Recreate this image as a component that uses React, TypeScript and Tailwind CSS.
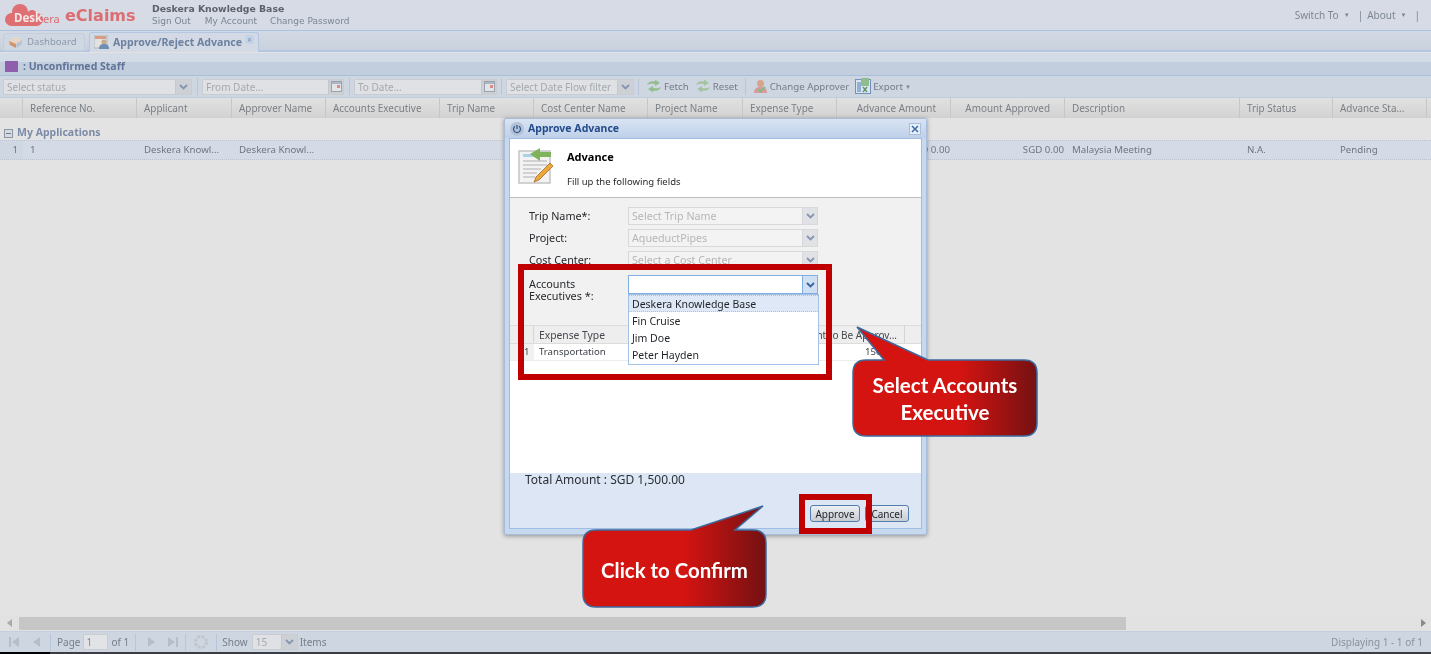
import React from "react";

const cols: [string, number, string, string?][] = [
  ["Reference No.", 114, "1"],
  ["Applicant", 95, "Deskera Knowl..."],
  ["Approver Name", 94, "Deskera Knowl..."],
  ["Accounts Executive", 114, ""],
  ["Trip Name", 94, ""],
  ["Cost Center Name", 114, ""],
  ["Project Name", 95, ""],
  ["Expense Type", 94, ""],
  ["Advance Amount", 114, "SGD 0.00", "r"],
  ["Amount Approved", 114, "SGD 0.00", "r"],
  ["Description", 175, "Malaysia Meeting"],
  ["Trip Status", 93, "N.A."],
  ["Advance Sta...", 94, "Pending"],
];

const Arrow = ({ dim = true }: { dim?: boolean }) => (
  <svg width="9" height="6" viewBox="0 0 9 6">
    <path d="M1 1l3.5 3.5L8 1" fill="none" stroke={dim ? "#8595b3" : "#3b5f9a"} strokeWidth="1.8" />
  </svg>
);

const Combo = ({ w, text }: { w: string; text: string }) => (
  <div className={`flex h-[16px] ${w} border border-[#c9ccd1] bg-[#dfe1e4]`}>
    <div className="flex-1 truncate pl-[3px] text-[10px] leading-[14px] text-[#a4a9af]">{text}</div>
    <div className="flex w-[16px] items-center justify-center border-l border-[#c4c8cd] bg-[#cdd1d6]">
      <Arrow />
    </div>
  </div>
);

const DateBox = ({ w, text }: { w: string; text: string }) => (
  <div className={`flex h-[16px] ${w} border border-[#c9ccd1] bg-[#dfe1e4]`}>
    <div className="flex-1 pl-[3px] text-[10px] leading-[14px] text-[#a4a9af]">{text}</div>
    <div className="flex w-[15px] items-center justify-center border-l border-[#c4c8cd] bg-[#ccd0d5]">
      <svg width="11" height="11" viewBox="0 0 11 11">
        <rect x=".5" y=".5" width="10" height="10" fill="#e2e4e8" stroke="#9aa3ad" />
        <rect x="1" y="1" width="9" height="2" fill="#a9b6c6" />
        <rect x="6" y="4" width="3" height="3" fill="#d98a8a" />
      </svg>
    </div>
  </div>
);

const Sep = () => <div className="h-[17px] w-px bg-[#b7c6d9]" />;

const Recycle = ({ c = "#93bd8f" }: { c?: string }) => (
  <svg width="16" height="14" viewBox="0 0 16 14">
    <path d="M1 6c1-3 4-4.500 8-3.500V0.500l5 3.500-5 3V5C6 4.500 3.500 4.500 1 6z" fill={c} />
    <path d="M15 8c-1 3-4 4.500-8 3.500V13.500L2 10l5-3v2c3 .5 5.500.5 8-1z" fill={c} />
  </svg>
);

const Btn = ({ children, label, className = "" }: { children: React.ReactNode; label: string; className?: string }) => (
  <div className={`flex items-center gap-[2px] ${className}`}>
    {children}
    <span className="pt-[2px] text-[9.7px] text-[#737c8a]">{label}</span>
  </div>
);

const PagerIcon = ({ d }: { d: string }) => (
  <svg width="13" height="12" viewBox="0 0 13 12">
    <path d={d} fill="#b6bec9" />
  </svg>
);

const FormRow = ({ label, text }: { label: string; text: string }) => (
  <div className="flex h-[18px] items-center">
    <div className="w-[99px] text-[10.8px] text-[#26292d]">{label}</div>
    <div className="flex h-[18px] w-[190px] border border-[#d6d8da] bg-[#f3f3f3]">
      <div className="flex-1 pl-[3px] text-[10.7px] leading-[16px] text-[#b4b6b8]">{text}</div>
      <div className="flex w-[15px] items-center justify-center border-l border-[#d6d8da] bg-[#e0e2e5]">
        <Arrow />
      </div>
    </div>
  </div>
);

function Callout({
  id, box, d, stops,
}: { id: string; box: [number, number, number, number]; d: string; stops?: boolean }) {
  return (
    <svg
      className="absolute"
      style={{ left: box[0], top: box[1] }}
      width={box[2]}
      height={box[3]}
      viewBox={`${box[0]} ${box[1]} ${box[2]} ${box[3]}`}
    >
      <defs>
        <linearGradient id={id} x1="0" x2="1" y1="0" y2="0">
          <stop offset="0" stopColor="#d41411" />
          <stop offset={stops ? ".58" : ".55"} stopColor="#d41411" />
          <stop offset="1" stopColor="#741112" />
        </linearGradient>
      </defs>
      <path d={d} fill={`url(#${id})`} stroke="#3d6a9e" strokeWidth="1.5" />
    </svg>
  );
}

export default function App() {
  return (
    <div
      className="relative flex h-[654px] w-[1431px] flex-col overflow-hidden bg-[#e3e3e3] blur-[0.3px]"
      style={{ fontFamily: '"Noto Sans", "Liberation Sans", sans-serif' }}
    >
      {/* top header */}
      <header className="flex h-[31px] shrink-0 items-start border-b border-[#a9c1e2] bg-[#d6dbe5]">
        <div className="relative ml-[5px] mt-[3px] h-[24px] w-[132px]">
          <svg width="40" height="24" viewBox="0 0 40 24" className="absolute left-0 top-0">
            <rect x="0" y="10" width="38" height="13" rx="6.500" fill="#de7074" />
            <circle cx="15" cy="9" r="8" fill="#de7074" />
            <circle cx="27" cy="12" r="5" fill="#de7074" />
          </svg>
          <div className="absolute left-[9px] top-[7px] text-[11.5px] font-bold leading-[16px] text-[#f6e6e6]">Desk</div>
          <div className="absolute left-[38px] top-[8px] text-[11px] leading-[15px] text-[#dc6d70]">era</div>
          <div className="absolute left-[60px] top-[2px] text-[16px] font-bold leading-[22px] text-[#dc6d70]" style={{ fontFamily: '"DejaVu Sans", sans-serif' }}>eClaims</div>
        </div>
        <div className="ml-[15px] mt-[3px] text-[#6d7582]">
          <div className="text-[9.3px] font-bold leading-[11px] text-[#5c626d]" style={{ fontFamily: '"DejaVu Sans", sans-serif' }}>Deskera Knowledge Base</div>
          <div className="flex gap-[13px] text-[9px] leading-[14px] text-[#7c8694]" style={{ fontFamily: '"DejaVu Sans", sans-serif' }}>
            <span>Sign Out</span>
            <span className="ml-[1px]">My Account</span>
            <span>Change Password</span>
          </div>
        </div>
        <div className="ml-auto mr-[11px] mt-[8px] flex items-center text-[10px] leading-[14px] text-[#7d8694]">
          <span>Switch To</span><span className="ml-[5px] text-[6px]">▼</span>
          <span className="ml-[8px]">|</span><span className="ml-[4px]">About</span><span className="ml-[5px] text-[6px]">▼</span>
          <span className="ml-[8px]">|</span>
        </div>
      </header>

      {/* tabs */}
      <nav className="flex h-[21px] shrink-0 items-end gap-[4px] border-b-[2px] border-[#b3c7e2] bg-gradient-to-b from-[#d4dae4] to-[#c8d1dd] pl-[3px]">
        <div className="mb-[-1px] flex h-[18px] w-[82px] items-center gap-[4px] rounded-t-[3px] border border-[#c2cfe0] bg-[#cfd7e3] pl-[4px]">
          <svg width="15" height="13" viewBox="0 0 15 13">
            <path d="M1 5l6-4 7 3-6 4z" fill="#e7d6c4" /><path d="M1 5l7 3v4L2 9z" fill="#d49369" /><path d="M8 8l6-4v4l-5 4z" fill="#b9c4d3" />
          </svg>
          <span className="text-[9.6px] text-[#8c99ab]">Dashboard</span>
        </div>
        <div className="relative mb-[-2px] flex h-[20px] w-[170px] items-center gap-[3px] rounded-t-[3px] border border-b-0 border-[#b3c7e2] bg-[#d3dae5] pb-[2px] pl-[4px]">
          <svg width="16" height="14" viewBox="0 0 16 14">
            <rect x="0" y="0" width="13" height="13" fill="#e4e2de" stroke="#aeb5bd" /><rect x="1" y="1" width="11" height="3" fill="#d79c82" />
            <circle cx="10" cy="7" r="2.500" fill="#cba98c" /><path d="M5 14c0-4 2-5 5-5s5 1 5 5z" fill="#6d8fb4" />
          </svg>
          <span className="text-[10.6px] font-bold leading-[16px] text-[#6d81a1]">Approve/Reject Advance</span>
          <span className="absolute right-[4px] top-[2px] flex h-[9px] w-[9px] items-center justify-center rounded-[2px] bg-[#c5d3e6] text-[8px] leading-none text-[#7f93b0]">×</span>
        </div>
      </nav>

      {/* section title */}
      <section className="mt-[1px] h-[23px] shrink-0 border-b border-[#a9c0dd] bg-gradient-to-b from-[#d3dbe6] from-40% to-[#c2cedd] to-40%">
        <div className="flex h-full items-center pl-[5px] pt-[5px]">
          <div className="h-[11px] w-[13px] bg-[#8f5fae]" />
          <span className="ml-[5px] text-[10.5px] font-bold text-[#5f7498]">: Unconfirmed Staff</span>
        </div>
      </section>

      {/* toolbar */}
      <div className="flex h-[22px] shrink-0 items-center border-b border-[#bccbdd] bg-[#ced6e2] pl-[3px]">
        <Combo w="w-[189px]" text="Select status" />
        <div className="ml-[5px]"><Sep /></div>
        <div className="ml-[4px]"><DateBox w="w-[142px]" text="From Date..." /></div>
        <div className="ml-[5px]"><Sep /></div>
        <div className="ml-[4px]"><DateBox w="w-[143px]" text="To Date..." /></div>
        <div className="ml-[4px]"><Sep /></div>
        <div className="ml-[4px]"><Combo w="w-[128px]" text="Select Date Flow filter" /></div>
        <div className="ml-[4px]"><Sep /></div>
        <Btn label="Fetch" className="ml-[7px]"><Recycle /></Btn>
        <Btn label="Reset" className="ml-[6px]"><Recycle c="#a3c4a3" /></Btn>
        <div className="ml-[7px]"><Sep /></div>
        <Btn label="Change Approver" className="ml-[7px]">
          <svg width="15" height="15" viewBox="0 0 15 15">
            <circle cx="7.500" cy="4.500" r="3.500" fill="#d8a38d" />
            <path d="M1 14c0-5 3-6 6.500-6S14 9 14 14z" fill="#dc9a9a" />
            <path d="M5 10l2.500 2.500L12 8" fill="none" stroke="#86b98a" strokeWidth="2" />
          </svg>
        </Btn>
        <Btn label="Export" className="ml-[6px]">
          <svg width="16" height="16" viewBox="0 0 16 16">
            <rect x=".5" y="1.500" width="15" height="14" fill="#dbe4ee" stroke="#6f93bd" />
            <rect x="2" y="4" width="4" height="10" fill="#8fb1d6" />
            <rect x="6" y="0" width="8" height="8" fill="#8fbd8f" />
            <path d="M8 9l4 5M12 9l-4 5" stroke="#5f8f68" strokeWidth="1.300" />
          </svg>
        </Btn>
        <span className="ml-[2px] pt-[2px] text-[6px] text-[#7c8694]">▼</span>
      </div>

      {/* grid header */}
      <div className="flex h-[20px] shrink-0 bg-gradient-to-b from-[#e1e1e1] to-[#d2d2d2]">
        <div className="w-[23px] shrink-0 border-r border-[#c7c7c7]" />
        {cols.map(([n, w, , a]) => (
          <div
            key={n}
            style={{ width: w }}
            className={`shrink-0 truncate border-r border-[#c7c7c7] text-[9.9px] leading-[21px] text-[#7a7f85] ${a ? "pr-[14px] text-right" : "pl-[7px]"}`}
          >
            {n}
          </div>
        ))}
      </div>

      {/* group */}
      <div className="flex h-[22px] shrink-0 items-center pl-[4px] pt-[8px]">
        <span className="flex h-[9px] w-[9px] items-center justify-center border border-[#8c97a6] bg-[#d7dbe1]">
          <span className="h-px w-[5px] bg-[#6f7b8c]" />
        </span>
        <span className="ml-[4px] text-[10.5px] font-bold text-[#7c8ca8]">My Applications</span>
      </div>

      {/* row */}
      <div className="flex h-[20px] shrink-0 border-y border-dotted border-[#bcc5d3] bg-[#d5dbe6]">
        <div className="w-[23px] shrink-0 bg-[#cfd7e3] pr-[5px] text-right text-[9.8px] leading-[17px] text-[#6f7680]">1</div>
        {cols.map(([n, w, v, a]) => (
          <div
            key={n}
            style={{ width: w }}
            className={`shrink-0 truncate text-[9.7px] leading-[17px] text-[#6f7680] ${a ? "pr-[1px] text-right" : "pl-[7px]"}`}
          >
            {v}
          </div>
        ))}
      </div>

      <div className="flex-1" />

      {/* scrollbar */}
      <div className="flex h-[16px] shrink-0 items-center bg-[#e2e2e2]">
        <div className="flex w-[19px] justify-center">
          <span className="h-0 w-0 border-y-[4px] border-r-[5px] border-y-transparent border-r-[#a9a9a9]" />
        </div>
        <div className="h-[13px] w-[1107px] bg-[#c6c6c6]" />
        <div className="ml-auto mr-[5px] h-0 w-0 border-y-[4px] border-l-[5px] border-y-transparent border-l-[#8a8a8a]" />
      </div>

      {/* pager */}
      <footer className="flex h-[21px] shrink-0 items-center border-t border-[#c3cfde] bg-[#ced6e2] pl-[8px] text-[10px] text-[#757e8b]">
        <PagerIcon d="M1 1h2v10H1zM11 1v10L4 6z" />
        <div className="ml-[9px]"><PagerIcon d="M10 1v10L3 6z" /></div>
        <div className="ml-[7px]"><Sep /></div>
        <span className="ml-[6px]">Page</span>
        <div className="ml-[3px] h-[16px] w-[25px] border border-[#c9ccd1] bg-[#e2e3e6] pl-[2px] leading-[14px] text-[#8584a0]">1</div>
        <span className="ml-[3px]">of 1</span>
        <div className="ml-[6px]"><Sep /></div>
        <div className="ml-[9px]"><PagerIcon d="M3 1v10l7-5z" /></div>
        <div className="ml-[8px]"><PagerIcon d="M2 1v10l7-5zM10 1h2v10h-2z" /></div>
        <div className="ml-[6px]"><Sep /></div>
        <svg width="16" height="16" viewBox="0 0 16 16" className="ml-[7px]">
          <circle cx="8" cy="8" r="5.500" fill="none" stroke="#c2c6cc" strokeWidth="3" strokeDasharray="3 1.300" />
        </svg>
        <div className="ml-[7px]"><Sep /></div>
        <span className="ml-[5px]">Show</span>
        <div className="ml-[4px]"><Combo w="w-[46px]" text="15" /></div>
        <span className="ml-[2px]">Items</span>
        <span className="ml-auto mr-[8px] text-[#8a929e]">Displaying 1 - 1 of 1</span>
      </footer>
      <div className="flex h-[2px] shrink-0 bg-[#3b3d42]">
        <div className="h-full w-[50px] bg-black" />
      </div>

      {/* modal */}
      <div className="absolute left-[504px] top-[118px] flex h-[417px] w-[423px] flex-col rounded-[2px] border border-[#a9bdd8] bg-[#c7d9ef] shadow-[0_1px_4px_rgba(60,60,60,0.5)]">
        <div className="flex h-[19px] shrink-0 items-center bg-gradient-to-b from-[#d9e4f3] to-[#bed0e9] pl-[5px]">
          <span className="flex h-[14px] w-[14px] items-center justify-center rounded-full bg-[#b4c2d4]">
            <svg width="10" height="10" viewBox="0 0 10 10">
              <path d="M3 2.200a3.500 3.500 0 1 0 4 0" fill="none" stroke="#2f5c96" strokeWidth="1.300" />
              <path d="M5 1v4" stroke="#2f5c96" strokeWidth="1.300" />
            </svg>
          </span>
          <span className="ml-[4px] text-[10.5px] font-bold text-[#244b8c]">Approve Advance</span>
          <span className="ml-auto mr-[5px] flex h-[12px] w-[12px] items-center justify-center border border-[#a9bedb] bg-[#e6eef8]">
            <svg width="8" height="8" viewBox="0 0 8 8"><path d="M1 1l6 6M7 1L1 7" stroke="#3c69a8" strokeWidth="1.500" /></svg>
          </span>
        </div>
        <div className="mx-[4px] mb-[5px] flex flex-1 flex-col border border-[#9fbde3] bg-white">
          <div className="relative flex h-[59px] shrink-0 border-b border-[#bdbdbd] bg-white">
            <svg width="36" height="38" viewBox="0 0 36 38" className="ml-[8px] mt-[9px] shrink-0">
              <rect x="1" y="3" width="31" height="32" fill="#f3f3f3" stroke="#c4c4c4" strokeWidth="1.500" />
              <rect x="5" y="6" width="20" height="3" fill="#a9d3e4" />
              <path d="M5 13h24M5 17h24M5 21h18M5 25h14M5 29h12" stroke="#c6c6c6" strokeWidth="1.300" />
              <path d="M33 4H22V0L12 6l10 7V9h11z" fill="#7fb45c" />
              <path d="M32 15l3 3-14 14-5 2 2-5z" fill="#eca73a" stroke="#a96a2a" strokeWidth=".8" />
            </svg>
            <div className="ml-[13px]">
              <div className="mt-[10px] text-[11px] font-bold leading-[16px] text-black">Advance</div>
              <div className="mt-[10px] text-[9.5px] leading-[13px] text-[#2a2a2a]">Fill up the following fields</div>
            </div>
          </div>
          <div className="flex h-[127px] shrink-0 flex-col gap-[4px] bg-[#f1f1f1] pl-[19px] pt-[9px]">
            <FormRow label="Trip Name*:" text="Select Trip Name" />
            <FormRow label="Project:" text="AqueductPipes" />
            <FormRow label="Cost Center:" text="Select a Cost Center" />
            <div className="mt-[2px] flex h-[30px]">
              <div className="w-[99px] pt-[3px] text-[10.8px] leading-[12px] text-[#26292d]">Accounts<br />Executives *:</div>
              <div className="flex h-[19px] w-[190px] border border-[#7eaee4] bg-white">
                <div className="flex-1" />
                <div className="flex w-[15px] items-center justify-center border-l border-[#7eaee4] bg-[#cfe0f3]"><Arrow dim={false} /></div>
              </div>
            </div>
          </div>
          <div className="flex h-[19px] shrink-0 border-y border-[#dcdcdc] bg-[#eeeeee]">
            <div className="w-[24px] border-r border-[#d5d5d5]" />
            <div className="w-[226px] border-r border-[#d5d5d5] pl-[5px] text-[10.3px] leading-[18px] text-[#45494f]">Expense Type</div>
            <div className="w-[145px] truncate border-r border-[#d5d5d5] pr-[7px] text-right text-[10px] leading-[18px] text-[#45494f]">Amount to Be Approv...</div>
          </div>
          <div className="flex h-[17px] shrink-0 border-b border-[#ededed] text-[9.6px] leading-[16px] text-[#3f4349]">
            <div className="w-[24px] bg-[#f1f1f1] pl-[14px]">1</div>
            <div className="w-[331px] pl-[5px]">Transportation</div>
            <div>1500.00</div>
          </div>
          <div className="flex-1" />
          <div className="h-[55px] shrink-0 bg-[#dde6f4] pl-[15px]">
            <div className="text-[12px] leading-[14px] text-[#2b2f36]">Total Amount : SGD 1,500.00</div>
            <div className="mr-[12px] mt-[18px] flex justify-end gap-[5px]">
              <button className="h-[17px] w-[50px] rounded-[3px] border border-[#4f7eaf] bg-gradient-to-b from-[#eceff3] to-[#c9cdd2] text-[10px] leading-[14px] text-[#20262e]">Approve</button>
              <button className="h-[17px] w-[44px] rounded-[3px] border border-[#4f7eaf] bg-gradient-to-b from-[#eceff3] to-[#c9cdd2] text-[10px] leading-[14px] text-[#20262e]">Cancel</button>
            </div>
          </div>
        </div>
        {/* dropdown list */}
        <div className="absolute left-[123px] top-[175px] w-[191px] border border-[#a3c2e6] bg-white text-[10.5px] text-[#1f2328]">
          <div className="h-[17px] border-y border-dotted border-[#a9c3e5] bg-[#dfe8f6] pl-[3px] leading-[16px]">Deskera Knowledge Base</div>
          <div className="h-[17px] pl-[3px] leading-[18px]">Fin Cruise</div>
          <div className="h-[17px] pl-[3px] leading-[18px]">Jim Doe</div>
          <div className="h-[18px] pl-[3px] leading-[19px]">Peter Hayden</div>
        </div>
      </div>

      {/* annotations */}
      <div className="absolute left-[518px] top-[264px] h-[116px] w-[314px] border-[6px] border-[#c00000]" />
      <div className="absolute left-[799px] top-[494px] h-[40px] w-[73px] border-[6px] border-[#c00000]" />
      <Callout
        id="c1"
        box={[850, 325, 190, 114]}
        d="M866 360L884 360L857 327L928 360L1024 360Q1037 360 1037 373L1037 423Q1037 436 1024 436L866 436Q853 436 853 423L853 373Q853 360 866 360Z"
        stops
      />
      <div className="absolute left-[853px] top-[372px] w-[184px] text-center text-[20.5px] font-bold leading-[27px] text-white" style={{ fontFamily: 'Lato, sans-serif' }}>
        Select Accounts<br />Executive
      </div>
      <Callout
        id="c2"
        box={[580, 504, 190, 106]}
        d="M596 530L691 530L763 506L735 530L753 530Q766 530 766 543L766 594Q766 607 753 607L596 607Q583 607 583 594L583 543Q583 530 596 530Z"
      />
      <div className="absolute left-[583px] top-[557px] w-[183px] text-center text-[20.4px] font-bold leading-[27px] text-white" style={{ fontFamily: 'Lato, sans-serif' }}>
        Click to Confirm
      </div>
    </div>
  );
}
